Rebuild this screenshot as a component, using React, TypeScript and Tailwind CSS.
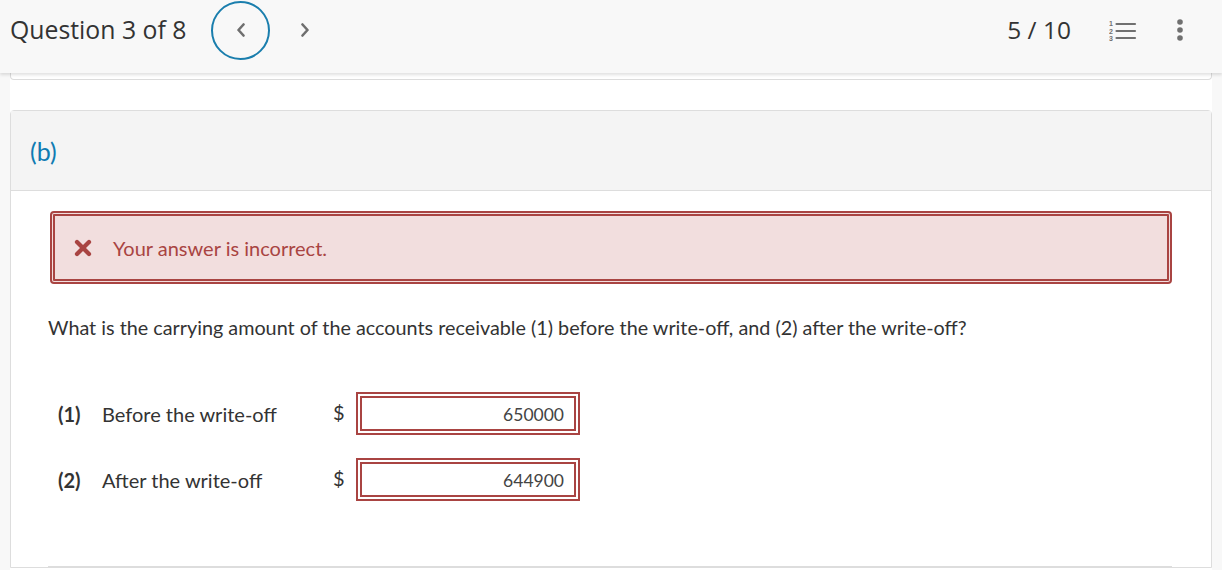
import React from 'react';

const ChevronLeft = () => (
  <svg width="10" height="14" viewBox="0 0 10 14" fill="none">
    <polyline points="7.5,1.5 2.5,7 7.5,12.5" stroke="#6f6f6f" strokeWidth="2.6" strokeLinecap="round" strokeLinejoin="round" />
  </svg>
);

const ChevronRight = () => (
  <svg width="10" height="14" viewBox="0 0 10 14" fill="none">
    <polyline points="2.5,1.5 7.5,7 2.5,12.5" stroke="#6f6f6f" strokeWidth="2.6" strokeLinecap="round" strokeLinejoin="round" />
  </svg>
);

const NumberedList = () => (
  <svg width="28" height="22" viewBox="0 0 28 22">
    <g fontFamily="Liberation Sans, sans-serif" fontSize="7" fontWeight="700" fill="#707070">
      <text x="0" y="6">1</text>
      <text x="0" y="13.5">2</text>
      <text x="0" y="20.5">3</text>
    </g>
    <g stroke="#707070" strokeWidth="2.2" strokeLinecap="round">
      <line x1="7.5" y1="4" x2="26" y2="4" />
      <line x1="7.5" y1="11" x2="26" y2="11" />
      <line x1="7.5" y1="18" x2="26" y2="18" />
    </g>
  </svg>
);

const Dots = () => (
  <svg width="8" height="24" viewBox="0 0 8 24">
    <circle cx="4" cy="4" r="2.8" fill="#707070" />
    <circle cx="4" cy="12" r="2.8" fill="#707070" />
    <circle cx="4" cy="20" r="2.8" fill="#707070" />
  </svg>
);

const CrossMark = () => (
  <svg width="18" height="18" viewBox="0 0 18 18">
    <g stroke="#a94442" strokeWidth="4.2" strokeLinecap="round">
      <line x1="3" y1="3" x2="15" y2="15" />
      <line x1="15" y1="3" x2="3" y2="15" />
    </g>
  </svg>
);

const rows = [
  { num: '(1)', label: 'Before the write-off', value: '650000' },
  { num: '(2)', label: 'After the write-off', value: '644900' },
];

export default function App() {
  return (
    <div className="h-[570px] w-full overflow-hidden bg-[#f8f8f8] font-['Lato','Liberation_Sans',sans-serif] text-[#333]">
      {/* top bar */}
      <div className="relative z-10 h-[73px] bg-[#f8f8f8] pl-[10px] pr-[38px] shadow-[0_2px_3px_rgba(0,0,0,0.12)]">
        <div className="flex h-[60px] items-center">
          <span className="font-['Open_Sans',sans-serif] text-[24.8px] text-[#333]">Question 3 of 8</span>
          <button className="ml-[25px] flex h-[59px] w-[59px] items-center justify-center rounded-full border-2 border-[#1a7ead]">
            <ChevronLeft />
          </button>
          <button className="ml-[25px] flex h-[59px] w-[20px] items-center justify-center">
            <ChevronRight />
          </button>
          <div className="ml-auto flex items-center">
            <span className="font-['Open_Sans',sans-serif] text-[24.5px] text-[#333]">5 / 10</span>
            <span className="ml-[38px] mt-[2px]"><NumberedList /></span>
            <span className="ml-[39px]"><Dots /></span>
          </div>
        </div>
      </div>

      <div className="mx-[10px] h-[497px] bg-white">
        {/* previous card bottom */}
        <div className="h-[7px] rounded-b-[4px] border border-t-0 border-[#dcdcdc]" />

        {/* card */}
        <div className="mt-[30px] rounded-t-[4px] border border-[#dddddd]">
          <div className="flex h-[80px] items-center border-b border-[#dddddd] bg-[#f4f4f4] pl-[19px] pt-[2px]">
            <span className="text-[25px] text-[#0f7bb2]">(b)</span>
          </div>

          <div className="pl-[37px] pr-[39px] pt-[20px]">
            <div className="ml-[2px] flex h-[73px] items-center rounded-[4px] border-[5px] border-double border-[#a94442] bg-[#f2dede] pl-[19px]">
              <CrossMark />
              <span className="ml-[21px] text-[20px] text-[#a94442]">Your answer is incorrect.</span>
            </div>

            <p className="mt-[30px] text-[19.8px] leading-[26px] text-[#333]">
              What is the carrying amount of the accounts receivable (1) before the write-off, and (2) after the write-off?
            </p>

            <div className="mt-[52px] flex flex-col gap-[23px] pl-[10px]">
              {rows.map((r) => (
                <div key={r.num} className="flex items-center">
                  <span className="w-[44px] text-[20px] font-bold text-[#333]">{r.num}</span>
                  <span className="w-[231px] text-[20px] text-[#333]">{r.label}</span>
                  <span className="mb-[4px] w-[23px] text-[20px] text-[#333]">$</span>
                  <div className="flex h-[43px] w-[224px] items-center justify-end border-[6px] border-double border-[#a94442] pr-[10px] pt-[3px] text-[17.5px] text-[#444]">
                    {r.value}
                  </div>
                </div>
              ))}
            </div>

            <div className="mt-[65px] border-t border-[#dddddd]" />
          </div>
        </div>
      </div>
    </div>
  );
}
